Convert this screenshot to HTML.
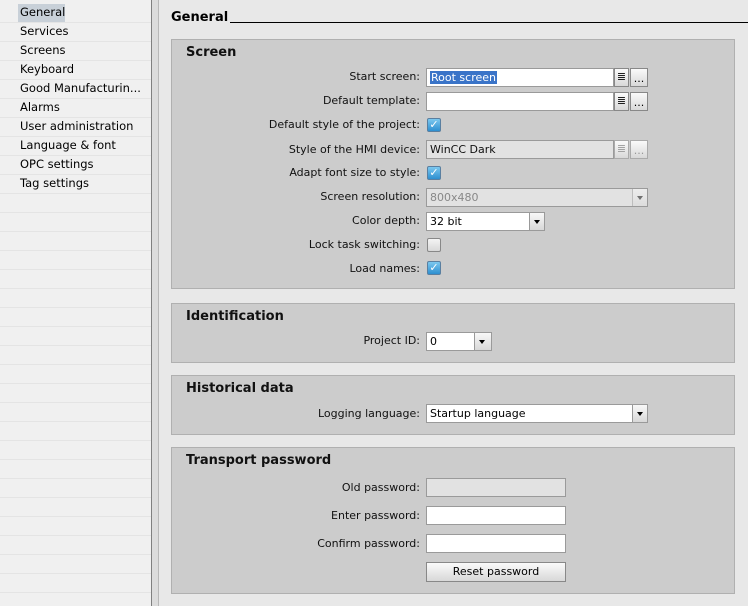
<!DOCTYPE html>
<html><head><style>
*{box-sizing:border-box;margin:0;padding:0}
body{width:748px;height:606px;overflow:hidden;background:#e8e8e8;font-family:"DejaVu Sans","Liberation Sans",sans-serif;font-size:11px;color:#000;position:relative}
.nav{position:absolute;left:0;top:0;width:151px;height:606px;background:#f0f0f0;background-image:repeating-linear-gradient(to bottom,transparent 0,transparent 18px,#e4e4e4 18px,#e4e4e4 19px);background-position:0 4px}
.nav div{position:absolute;left:20px;font-size:11.5px}
.split{position:absolute;left:151px;top:0;width:8px;height:606px;background:#dcdcdc;border-left:1px solid #808080;border-right:1px solid #b8b8b8}
.a{position:absolute}
.panel{position:absolute;left:171px;width:564px;background:#cccccc;border:1px solid #b0b0b0}
.ph{position:absolute;left:14px;top:5px;font-weight:bold;font-size:13px;color:#111}
.lbl{position:absolute;right:328px;text-align:right;white-space:nowrap;font-size:11px;color:#111}
.in{position:absolute;height:19px;background:#fff;border:1px solid #9a9a9a;padding:2px 3px 0;font-size:11px}
.dis{background:#e2e2e2;color:#888}
.chk{position:absolute;width:14px;height:14px;border:1px solid #5a7fa0;border-radius:2px;background:linear-gradient(#7cc8ef,#2d8fd0);color:#fff;font-size:11px;line-height:12px;text-align:center;font-weight:bold}
.chk.off{background:linear-gradient(#f4f4f4,#d8d8d8);border-color:#888}
.btn{position:absolute;height:19px;border:1px solid #888;background:linear-gradient(#fafafa,#d8d8d8);font-size:11px;text-align:center;line-height:16px}
.dd{position:absolute;width:15px;height:17px;top:0;right:0;border-left:1px solid #999;background:linear-gradient(#f8f8f8,#d8d8d8)}
.dd:after{content:"";position:absolute;left:4px;top:7px;border:3px solid transparent;border-top:4px solid #000}
</style></head><body>
<div class="nav">
<div style="left:18px;top:4px;width:47px;height:18px;background:#c8d0d8;padding:1px 2px">General</div>
<div style="top:24px">Services</div>
<div style="top:43px">Screens</div>
<div style="top:62px">Keyboard</div>
<div style="top:81px">Good Manufacturin...</div>
<div style="top:100px">Alarms</div>
<div style="top:119px">User administration</div>
<div style="top:138px">Language &amp; font</div>
<div style="top:157px">OPC settings</div>
<div style="top:176px">Tag settings</div>
</div>
<div class="split"></div>
<div class="a" style="left:171px;top:10px;font-weight:bold;font-size:13px">General</div>
<div class="a" style="left:230px;top:22px;width:518px;height:1px;background:#000"></div>

<div class="panel" style="top:39px;height:250px">
<div class="ph">Screen</div>
</div>
<div class="lbl" style="top:70px">Start screen:</div>
<div class="in" style="left:426px;top:68px;width:188px"><span style="background:#3a74c8;color:#fff;padding:0 1px">Root screen</span></div>
<div class="btn" style="left:614px;top:68px;width:15px">≣</div>
<div class="btn" style="left:630px;top:68px;width:18px;line-height:20px">...</div>
<div class="lbl" style="top:94px">Default template:</div>
<div class="in" style="left:426px;top:92px;width:188px"></div>
<div class="btn" style="left:614px;top:92px;width:15px">≣</div>
<div class="btn" style="left:630px;top:92px;width:18px;line-height:20px">...</div>
<div class="lbl" style="top:118px">Default style of the project:</div>
<div class="chk" style="left:427px;top:118px">✓</div>
<div class="lbl" style="top:143px">Style of the HMI device:</div>
<div class="in dis" style="left:426px;top:140px;width:188px;color:#111">WinCC Dark</div>
<div class="btn" style="left:614px;top:140px;width:15px;color:#999;border-color:#aaa">≣</div>
<div class="btn" style="left:630px;top:140px;width:18px;line-height:20px;color:#999;border-color:#aaa">...</div>
<div class="lbl" style="top:166px">Adapt font size to style:</div>
<div class="chk" style="left:427px;top:166px">✓</div>
<div class="lbl" style="top:190px">Screen resolution:</div>
<div class="in dis" style="left:426px;top:188px;width:222px">800x480<div class="dd" style="opacity:.5"></div></div>
<div class="lbl" style="top:214px">Color depth:</div>
<div class="in" style="left:426px;top:212px;width:119px">32 bit<div class="dd"></div></div>
<div class="lbl" style="top:238px">Lock task switching:</div>
<div class="chk off" style="left:427px;top:238px"></div>
<div class="lbl" style="top:262px">Load names:</div>
<div class="chk" style="left:427px;top:261px">✓</div>

<div class="panel" style="top:303px;height:60px"><div class="ph">Identification</div></div>
<div class="lbl" style="top:334px">Project ID:</div>
<div class="in" style="left:426px;top:332px;width:66px">0<div class="dd" style="width:17px"></div></div>

<div class="panel" style="top:375px;height:60px"><div class="ph">Historical data</div></div>
<div class="lbl" style="top:407px">Logging language:</div>
<div class="in" style="left:426px;top:404px;width:222px">Startup language<div class="dd"></div></div>

<div class="panel" style="top:447px;height:147px"><div class="ph">Transport password</div></div>
<div class="lbl" style="top:481px">Old password:</div>
<div class="in dis" style="left:426px;top:478px;width:140px"></div>
<div class="lbl" style="top:509px">Enter password:</div>
<div class="in" style="left:426px;top:506px;width:140px"></div>
<div class="lbl" style="top:537px">Confirm password:</div>
<div class="in" style="left:426px;top:534px;width:140px"></div>
<div class="btn" style="left:426px;top:562px;width:140px;height:20px;line-height:18px">Reset password</div>
</body></html>
